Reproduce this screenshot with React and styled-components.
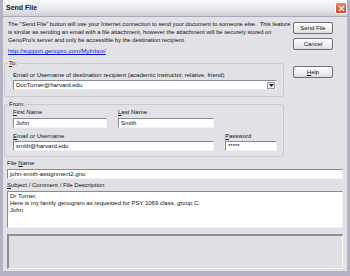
import styled, { createGlobalStyle } from "styled-components";

const Global = createGlobalStyle`
  html, body {
    margin: 0;
    padding: 0;
    background: #fff;
  }
  * {
    box-sizing: border-box;
  }
`;

const Window = styled.div`
  width: 350px;
  height: 276px;
  display: flex;
  flex-direction: column;
  background: #e2e1e6;
  border-left: 3px solid #b4b3c4;
  border-right: 3px solid #b4b3c4;
  border-bottom: 5px solid #b4b3c4;
  font-family: "Liberation Sans", Arial, sans-serif;
  font-size: 6px;
  line-height: 8px;
  color: #111;
  overflow: hidden;
`;

const TitleBar = styled.div`
  height: 17px;
  flex: none;
  margin: 0 -3px;
  padding: 0 3px 0 6px;
  display: flex;
  align-items: center;
  justify-content: space-between;
  background: linear-gradient(#fbfbfd, #e6e6ec 60%, #cfcfd9);
  border-bottom: 1px solid #a9a8b8;
`;

const Title = styled.div`
  font-weight: bold;
  font-size: 7px;
  color: #1a1a1a;
`;

const CloseBtn = styled.div`
  width: 12px;
  height: 12px;
  border-radius: 2px;
  border: 1px solid #fff;
  background: linear-gradient(#f08a6a, #d4401c);
  display: flex;
  align-items: center;
  justify-content: center;
`;

const Top = styled.div`
  display: flex;
  flex: none;
`;

const LeftCol = styled.div`
  width: 280px;
  margin-left: 1px;
  display: flex;
  flex-direction: column;
`;

const Desc = styled.p`
  margin: 3px 0 0 4px;
  white-space: nowrap;
  font-size: 5.8px;
`;

const Link = styled.a`
  margin: 3px 0 0 4px;
  color: #1010d0;
  text-decoration: underline;
`;

const Group = styled.fieldset`
  margin: ${(p) => p.$mt}px 0 0 0;
  padding: 0 6px ${(p) => p.$pb}px 8px;
  border: 1px solid #c9c8d0;
  border-radius: 3px;
  min-width: 0;
`;

const Legend = styled.legend`
  padding: 0 1px;
  margin-left: -5px;
  line-height: 8px;
`;

const Label = styled.div`
  margin-top: ${(p) => p.$mt || 0}px;
  white-space: nowrap;
`;

const Under = styled.span`
  text-decoration: underline;
`;

const Select = styled.div`
  margin-top: 1px;
  height: 10px;
  display: flex;
  align-items: center;
  justify-content: space-between;
  background: #fff;
  border: 1px solid #8a8a94;
  border-right-color: #e8e8ee;
  border-bottom-color: #e8e8ee;
  padding: 0 1px 0 2px;
`;

const DropArrow = styled.div`
  width: 8px;
  height: 7px;
  border: 1px solid #9a9aa4;
  background: #eeeef2;
  display: flex;
  align-items: center;
  justify-content: center;
`;

const FromGrid = styled.div`
  display: grid;
  grid-template-columns: 94px 96px 52px;
  column-gap: 11px;
`;

const Cell = styled.div`
  grid-column: ${(p) => p.$col || "auto"};
  display: flex;
  flex-direction: column;
  margin-top: ${(p) => p.$mt || 0}px;
`;

const Input = styled.div`
  margin-top: ${(p) => p.$mt || 2}px;
  height: ${(p) => p.$h || 10}px;
  background: #fff;
  border: 1px solid #8a8a94;
  border-right-color: #f2f2f6;
  border-bottom-color: #f2f2f6;
  padding: 1px 2px;
  line-height: 7px;
  white-space: pre-line;
  overflow: hidden;
`;

const ButtonCol = styled.div`
  margin-left: 9px;
  width: 40px;
  padding-top: 5px;
  display: flex;
  flex-direction: column;
`;

const Button = styled.div`
  margin-top: ${(p) => p.$mt || 0}px;
  height: 12px;
  display: flex;
  align-items: center;
  justify-content: center;
  border: 1px solid #6f6f78;
  border-radius: 2px;
  background: linear-gradient(#fdfdfd, #ececf0 70%, #d8d8de);
`;

const Bottom = styled.div`
  margin: 2px 4px 0 4px;
  display: flex;
  flex-direction: column;
`;

const StatusPanel = styled.div`
  margin: 6px 4px 0 4px;
  height: 35px;
  border: 1px solid #fbfbfd;
  border-top: 2px solid #8e8d98;
  border-left: 2px solid #8e8d98;
  background: #e0dfe4;
`;

export default function App() {
  return (
    <>
      <Global />
      <Window>
        <TitleBar>
          <Title>Send File</Title>
          <CloseBtn>
            <svg width="7" height="7" viewBox="0 0 7 7">
              <path d="M1 1L6 6M6 1L1 6" stroke="#fff" strokeWidth="1.4" />
            </svg>
          </CloseBtn>
        </TitleBar>

        <Top>
          <LeftCol>
            <Desc>
              The "Send File" button will use your Internet connection to send your document to someone else.&nbsp; This feature
              <br />
              is similar as sending an email with a file attachment, however the attachment will be securely stored on
              <br />
              GenoPro's server and only be accessible by the destination recipient.
            </Desc>
            <Link>http://support.genopro.com/MyInbox/</Link>

            <Group $mt={4} $pb={6}>
              <Legend>
                <Under>T</Under>o:
              </Legend>
              <Label $mt={4}>
                Email or Username of destination recipient (academic instructor, relative, friend)
              </Label>
              <Select>
                <span>DocTurner@harvard.edu</span>
                <DropArrow>
                  <svg width="5" height="3" viewBox="0 0 5 3">
                    <path d="M0 0H5L2.5 3Z" fill="#222" />
                  </svg>
                </DropArrow>
              </Select>
            </Group>

            <Group $mt={3} $pb={5}>
              <Legend>From:</Legend>
              <FromGrid>
                <Cell>
                  <Label>
                    <Under>F</Under>irst Name
                  </Label>
                  <Input>John</Input>
                </Cell>
                <Cell>
                  <Label>
                    <Under>L</Under>ast Name
                  </Label>
                  <Input>Smith</Input>
                </Cell>
                <Cell />
                <Cell $col="1 / 3" $mt={4}>
                  <Label>
                    <Under>E</Under>mail or Username
                  </Label>
                  <Input $mt={1}>smith@harvard.edu</Input>
                </Cell>
                <Cell $mt={4}>
                  <Label>
                    <Under>P</Under>assword
                  </Label>
                  <Input $mt={1}>*****</Input>
                </Cell>
              </FromGrid>
            </Group>
          </LeftCol>

          <ButtonCol>
            <Button>Send File</Button>
            <Button $mt={4}>Cancel</Button>
            <Button $mt={16}>
              <span>
                <Under>H</Under>elp
              </span>
            </Button>
          </ButtonCol>
        </Top>

        <Bottom>
          <Label>
            File <Under>N</Under>ame
          </Label>
          <Input>john-smith-assignment2.gno</Input>
          <Label $mt={2}>
            <Under>S</Under>ubject / Comment / File Description
          </Label>
          <Input $h={37} $mt={2}>
            {"Dr Turner,\nHere is my family genogram as requested for PSY 1069 class, group C.\nJohn"}
          </Input>
        </Bottom>

        <StatusPanel />
      </Window>
    </>
  );
}
